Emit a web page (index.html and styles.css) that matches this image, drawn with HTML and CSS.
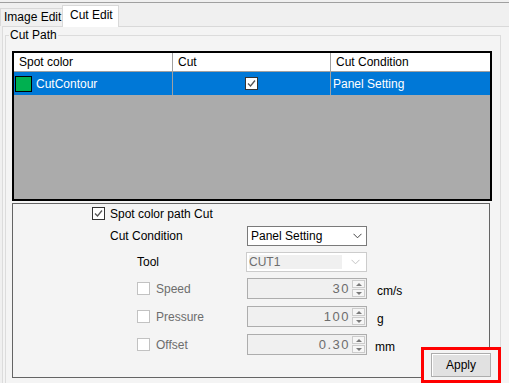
FILE: index.html
```html
<!DOCTYPE html>
<html>
<head>
<meta charset="utf-8">
<link rel="stylesheet" href="styles.css">
</head>
<body>
<div class="app">
  <div class="tabstrip">
    <div class="tab">Image Edit</div>
    <div class="tab active">Cut Edit</div>
  </div>
  <div class="pane">
    <fieldset class="group">
      <legend>Cut Path</legend>
      <div class="grid">
        <div class="grow head">
          <div class="c c1">Spot color</div>
          <div class="c c2">Cut</div>
          <div class="c c3">Cut Condition</div>
        </div>
        <div class="grow sel">
          <div class="c c1"><span class="swatch"></span><span>CutContour</span></div>
          <div class="c c2 center"><span class="cb on"><svg width="11" height="11" viewBox="0 0 11 11"><path d="M2 5.5 L4.5 8 L9 2.5" fill="none" stroke="#555" stroke-width="1.3"/></svg></span></div>
          <div class="c c3 tight">Panel Setting</div>
        </div>
        <div class="empty"></div>
      </div>
      <div class="panel">
        <div class="row r1">
          <span class="cb on"><svg width="11" height="11" viewBox="0 0 11 11"><path d="M2 5.5 L4.5 8 L9 2.5" fill="none" stroke="#555" stroke-width="1.3"/></svg></span>
          <span class="lbl">Spot color path Cut</span>
        </div>
        <div class="row r2">
          <div class="lab p97">Cut Condition</div>
          <div class="combo">
            <span class="ctext">Panel Setting</span>
            <svg class="chev" width="9" height="6" viewBox="0 0 9 6"><path d="M0.5 0.8 L4.5 4.8 L8.5 0.8" fill="none" stroke="#444" stroke-width="1"/></svg>
          </div>
        </div>
        <div class="row r3">
          <div class="lab p124">Tool</div>
          <div class="combo dis">
            <span class="ctext">CUT1</span>
            <svg class="chev" width="9" height="6" viewBox="0 0 9 6"><path d="M0.5 0.8 L4.5 4.8 L8.5 0.8" fill="none" stroke="#c4c4c4" stroke-width="1"/></svg>
          </div>
        </div>
        <div class="row r4">
          <div class="lab p124"><span class="cb off"></span><span class="dlbl">Speed</span></div>
          <div class="spin"><span class="val">30</span><span class="btns"><span class="sb"><i class="up"></i></span><span class="sb"><i class="dn"></i></span></span></div>
          <span class="unit">cm/s</span>
        </div>
        <div class="row r5">
          <div class="lab p124"><span class="cb off"></span><span class="dlbl">Pressure</span></div>
          <div class="spin"><span class="val">100</span><span class="btns"><span class="sb"><i class="up"></i></span><span class="sb"><i class="dn"></i></span></span></div>
          <span class="unit">g</span>
        </div>
        <div class="row r6">
          <div class="lab p124"><span class="cb off"></span><span class="dlbl">Offset</span></div>
          <div class="spin"><span class="val">0.30</span><span class="btns"><span class="sb"><i class="up"></i></span><span class="sb"><i class="dn"></i></span></span></div>
          <span class="unit mm">mm</span>
        </div>
      </div>
    </fieldset>
  </div>
  <div class="highlight"></div>
  <button class="apply">Apply</button>
</div>
</body>
</html>
```
FILE: styles.css
```css
* { box-sizing: border-box; }
html, body { margin: 0; padding: 0; }
body {
  font-family: "Liberation Sans", Arial, sans-serif;
  font-size: 12px;
  color: #000;
  background: #f0f0f0;
}
.app {
  position: relative;
  width: 509px;
  height: 383px;
  overflow: hidden;
  background: #f0f0f0;
  padding-top: 2px;
}
.tabstrip {
  display: flex;
  align-items: flex-end;
  height: 24px;
  border-top: 1px solid #a0a0a0;
}
.tab {
  height: 18px;
  width: 63px;
  border: 1px solid #d9d9d9;
  border-bottom: none;
  padding-left: 3px;
  line-height: 16px;
  background: #f0f0f0;
  white-space: nowrap;
}
.tab.active {
  position: relative;
  z-index: 2;
  width: 57px;
  height: 22px;
  margin-bottom: -1px;
  margin-left: -1px;
  background: #fff;
  padding-left: 7px;
  line-height: 18px;
}
.pane {
  margin-left: 2px;
  border-top: 1px solid #d9d9d9;
  border-left: 1px solid #dcdcdc;
  background: #f4f4f4;
  height: 400px;
  padding: 1px 0 0 2px;
}
.group {
  margin: 0;
  width: 496px;
  height: 400px;
  border: 1px solid #dcdcdc;
  padding: 9px 8px 0 6px;
}
.group legend {
  padding: 0 1px;
  margin-left: -3px;
  line-height: 14px;
  height: 14px;
  white-space: nowrap;
}
.grid {
  width: 480px;
  height: 150px;
  border: 2px solid #000;
  background: #ababab;
  display: flex;
  flex-direction: column;
}
.grow {
  display: flex;
}
.head {
  height: 19px;
  background: #fff;
  border-bottom: 1px solid #a0a0a0;
}
.sel {
  height: 23px;
  background: #0078d7;
  color: #fff;
}
.c {
  display: flex;
  align-items: center;
  padding-left: 5px;
  white-space: nowrap;
}
.c1 { width: 159px; border-right: 1px solid #a0a0a0; }
.c2 { width: 158px; border-right: 1px solid #a0a0a0; }
.c3 { flex: 1; }
.sel .c1 { padding-left: 1px; gap: 4px; }
.sel .c3 { padding-left: 2px; }
.center { justify-content: center; padding-left: 0; }
.swatch {
  width: 17px;
  height: 16px;
  background: #00b050;
  border: 1px solid #000;
}
.empty { flex: 1; }
.cb {
  display: inline-flex;
  align-items: center;
  justify-content: center;
  width: 13px;
  height: 13px;
  flex: none;
  background: #fff;
  border: 1px solid #333;
}
.cb.off { border-color: #c2c2c2; }
.panel {
  margin-top: 2px;
  width: 478px;
  height: 175px;
  border: 1px solid #646464;
  display: flex;
  flex-direction: column;
}
.row {
  display: flex;
  align-items: center;
  flex: none;
  white-space: nowrap;
}
.r1 { height: 15px; margin-top: 2px; padding-left: 79px; }
.r1 .lbl { margin-left: 5px; }
.r2 { height: 20px; margin-top: 5px; }
.r3 { height: 20px; margin-top: 6px; }
.r4 { height: 21px; margin-top: 6px; }
.r5, .r6 { height: 21px; margin-top: 7px; }
.lab {
  width: 234px;
  display: flex;
  align-items: center;
  height: 100%;
}
.p97 { padding-left: 97px; }
.p124 { padding-left: 124px; }
.dlbl { margin-left: 6px; color: #6d6d6d; }
.combo {
  width: 120px;
  height: 20px;
  border: 1px solid #7a7a7a;
  background: #fff;
  display: flex;
  align-items: center;
  padding-left: 3px;
}
.combo .ctext { flex: 1; }
.combo .chev { margin-right: 4px; }
.combo.dis {
  margin-left: -1px;
  width: 121px;
  border-color: #cccccc;
  padding: 2px;
}
.combo.dis .ctext {
  background: #f0f0f0;
  color: #6d6d6d;
  height: 14px;
  line-height: 14px;
  margin-right: 9px;
}
.spin {
  width: 120px;
  height: 21px;
  border: 1px solid #adadad;
  background: #f0f0f0;
  display: flex;
  align-items: center;
  padding-right: 1px;
}
.spin .val {
  flex: 1;
  text-align: right;
  color: #6d6d6d;
  padding-right: 2px;
  font-size: 13px;
  letter-spacing: 1.5px;
}
.btns {
  display: flex;
  flex-direction: column;
  width: 13px;
  height: 17px;
  gap: 1px;
}
.sb {
  flex: 1;
  border: 1px solid #cccccc;
  background: #f6f6f6;
  display: flex;
  align-items: center;
  justify-content: center;
}
.sb i {
  width: 0;
  height: 0;
  border-left: 3px solid transparent;
  border-right: 3px solid transparent;
}
.sb i.up { border-bottom: 3px solid #7a7a7a; }
.sb i.dn { border-top: 3px solid #7a7a7a; }
.unit { margin-left: 10px; margin-top: 4px; }
.unit.mm { margin-left: 8px; }
.highlight {
  position: absolute;
  left: 421px;
  top: 347px;
  width: 80px;
  height: 36px;
  border: 3px solid #ff0000;
  background: #f4f4f4;
  z-index: 3;
}
.apply {
  position: absolute;
  left: 431px;
  top: 353px;
  width: 60px;
  height: 24px;
  margin: 0;
  padding: 0;
  font-family: "Liberation Sans", Arial, sans-serif;
  font-size: 12px;
  color: #000;
  background: #e1e1e1;
  border: 1px solid #adadad;
  box-shadow: inset 1px 1px 0 #fff;
  z-index: 4;
}
```
